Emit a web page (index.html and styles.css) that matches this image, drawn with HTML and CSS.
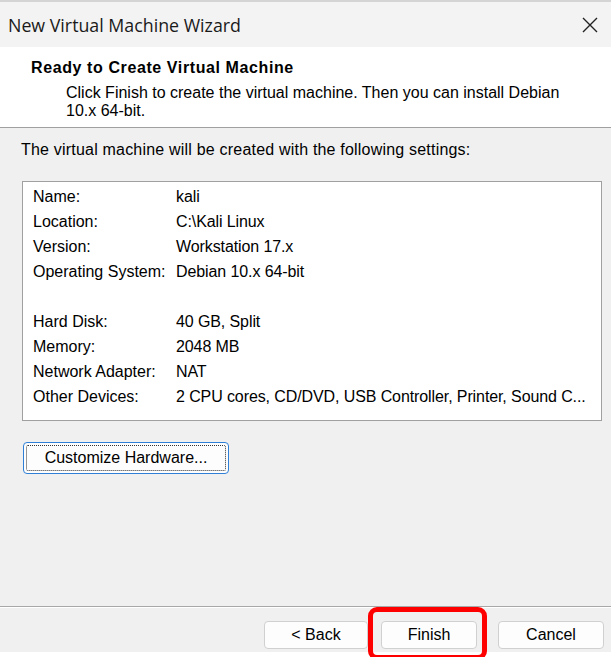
FILE: index.html
```html
<!DOCTYPE html>
<html>
<head>
<meta charset="utf-8">
<link rel="stylesheet" href="styles.css">
</head>
<body>
<div class="win">
  <div class="titlebar">
    <span class="title">New Virtual Machine Wizard</span>
    <svg class="close" width="16" height="16" viewBox="0 0 16 16"><path d="M1 1 L15 15 M15 1 L1 15" stroke="#222" stroke-width="1.4" fill="none"/></svg>
  </div>
  <div class="header">
    <div class="h-title">Ready to Create Virtual Machine</div>
    <div class="h-sub">Click Finish to create the virtual machine. Then you can install Debian 10.x 64-bit.</div>
  </div>
  <div class="body">
    <div class="intro">The virtual machine will be created with the following settings:</div>
    <div class="box">
      <div class="row"><span class="lbl">Name:</span><span class="val">kali</span></div>
      <div class="row"><span class="lbl">Location:</span><span class="val">C:\Kali Linux</span></div>
      <div class="row"><span class="lbl">Version:</span><span class="val">Workstation 17.x</span></div>
      <div class="row"><span class="lbl">Operating System:</span><span class="val">Debian 10.x 64-bit</span></div>
      <div class="row"></div>
      <div class="row"><span class="lbl">Hard Disk:</span><span class="val">40 GB, Split</span></div>
      <div class="row"><span class="lbl">Memory:</span><span class="val">2048 MB</span></div>
      <div class="row"><span class="lbl">Network Adapter:</span><span class="val">NAT</span></div>
      <div class="row"><span class="lbl">Other Devices:</span><span class="val">2 CPU cores, CD/DVD, USB Controller, Printer, Sound C...</span></div>
    </div>
    <button class="btn custom"><span class="focus">Customize Hardware...</span></button>
  </div>
  <div class="footer">
    <button class="btn back">&lt; Back</button>
    <span class="mark"><button class="btn finish">Finish</button></span>
    <button class="btn cancel">Cancel</button>
  </div>
</div>
</body>
</html>
```
FILE: styles.css
```css
html, body { margin: 0; padding: 0; }
body {
  width: 611px;
  height: 657px;
  overflow: hidden;
  background: #f0f0f0;
  font-family: "Liberation Sans", Arial, sans-serif;
  color: #000;
}
.win { display: flex; flex-direction: column; height: 657px; }
.titlebar {
  height: 45px;
  border-top: 2px solid #d4d4d4;
  background: #f3f3f3;
  display: flex;
  align-items: center;
  justify-content: space-between;
  padding: 0 13px 0 8px;
  flex: none;
}
.title { font-family: "Open Sans", "Noto Sans", sans-serif; font-size: 17.8px; color: #1a1a1a; margin-top: 1px; }
.header {
  background: #fff;
  border-bottom: 1px solid #a0a0a0;
  padding-left: 31px;
  padding-top: 12px;
  box-sizing: border-box;
  height: 81px;
  flex: none;
}
.h-title { font-weight: bold; font-size: 16px; line-height: 18px; letter-spacing: 0.6px; color: #000; }
.h-sub { font-size: 16px; line-height: 18px; padding-left: 35px; padding-top: 7px; width: 505px; }
.body { flex: 1; padding: 13px 9px 0 22px; }
.intro { font-size: 16px; line-height: 18px; margin-left: -1px; letter-spacing: 0.2px; }
.box {
  margin-top: 22px;
  width: 580px;
  height: 240px;
  background: #fff;
  border: 1px solid #a0a0a0;
  padding: 5px 0 0 10px;
  box-sizing: border-box;
}
.row { height: 25px; font-size: 16px; line-height: 20px; display: flex; white-space: nowrap; }
.lbl { width: 143px; }
.val { letter-spacing: -0.1px; }
.btn {
  font-family: "Liberation Sans", Arial, sans-serif;
  font-size: 16px;
  background: #fdfdfd;
  border: 1px solid #d0d0d0;
  border-radius: 4px;
  color: #000;
  padding: 0;
}
.custom {
  margin-top: 21px;
  margin-left: 1px;
  width: 206px;
  height: 32px;
  border: 1px solid #2f7fd7;
  padding: 2px;
  display: flex;
}
.custom .focus {
  flex: 1;
  border: 1px dotted #333;
  border-radius: 2px;
  display: flex; align-items: center; justify-content: center;
}
.footer {
  height: 51px;
  flex: none;
  border-top: 1px solid #a8a8a8;
  box-shadow: inset 0 1px 0 #fff;
  display: flex;
  align-items: flex-start;
  padding-left: 264px;
  padding-top: 14px;
  box-sizing: border-box;
  background: linear-gradient(#f0f0f0 45px, #fff 45px);
}
.back { width: 104px; height: 28px; }
.mark { position: relative; margin-left: 13px; display: flex; }
.mark::after {
  content: "";
  position: absolute;
  left: -13px; right: -10px; top: -14px; bottom: -11px;
  border: 5px solid #ff0000;
  border-radius: 9px;
}
.finish { width: 96px; height: 28px; }
.cancel { width: 106px; height: 28px; margin-left: 21px; }
```
